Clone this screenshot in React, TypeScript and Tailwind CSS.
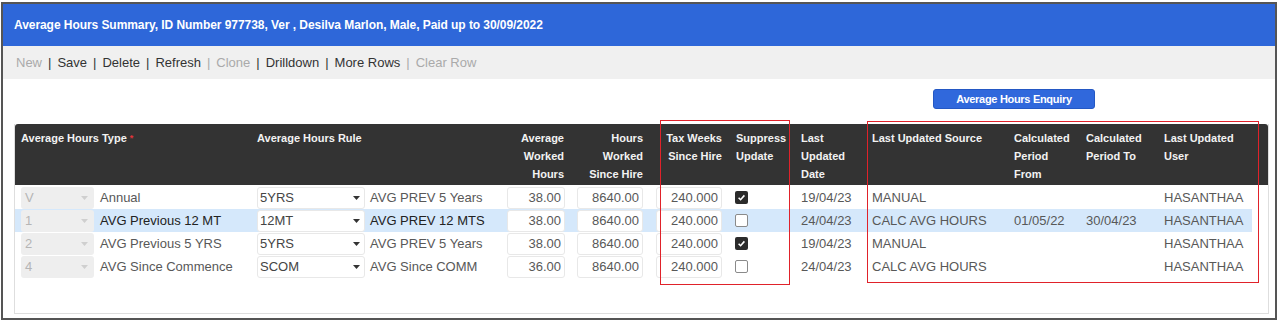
type Row = {
  code: string;
  type: string;
  rule: string;
  ruleDesc: string;
  avg: string;
  hours: string;
  weeks: string;
  suppress: boolean;
  date: string;
  source: string;
  from: string;
  to: string;
  user: string;
  selected?: boolean;
};

const rows: Row[] = [
  { code: "V", type: "Annual", rule: "5YRS", ruleDesc: "AVG PREV 5 Years", avg: "38.00", hours: "8640.00", weeks: "240.000", suppress: true, date: "19/04/23", source: "MANUAL", from: "", to: "", user: "HASANTHAA" },
  { code: "1", type: "AVG Previous 12 MT", rule: "12MT", ruleDesc: "AVG PREV 12 MTS", avg: "38.00", hours: "8640.00", weeks: "240.000", suppress: false, date: "24/04/23", source: "CALC AVG HOURS", from: "01/05/22", to: "30/04/23", user: "HASANTHAA", selected: true },
  { code: "2", type: "AVG Previous 5 YRS", rule: "5YRS", ruleDesc: "AVG PREV 5 Years", avg: "38.00", hours: "8640.00", weeks: "240.000", suppress: true, date: "19/04/23", source: "MANUAL", from: "", to: "", user: "HASANTHAA" },
  { code: "4", type: "AVG Since Commence", rule: "SCOM", ruleDesc: "AVG Since COMM", avg: "36.00", hours: "8640.00", weeks: "240.000", suppress: false, date: "24/04/23", source: "CALC AVG HOURS", from: "", to: "", user: "HASANTHAA" },
];

const tools = [
  { label: "New", enabled: false },
  { label: "Save", enabled: true },
  { label: "Delete", enabled: true },
  { label: "Refresh", enabled: true },
  { label: "Clone", enabled: false },
  { label: "Drilldown", enabled: true },
  { label: "More Rows", enabled: true },
  { label: "Clear Row", enabled: false },
];

function Caret({ light }: { light?: boolean }) {
  return (
    <svg width="7" height="4" viewBox="0 0 7 4" className="shrink-0">
      <path d="M0 0h7L3.5 4z" fill={light ? "#cfcfcf" : "#333"} />
    </svg>
  );
}

function Check({ on }: { on: boolean }) {
  if (on) {
    return (
      <span className="flex h-[13px] w-[13px] items-center justify-center rounded-[2px] bg-[#2b2b2b]">
        <svg width="9" height="9" viewBox="0 0 9 9">
          <path d="M1.6 4.7l2 2 3.8-4.3" fill="none" stroke="#fff" strokeWidth="1.6" />
        </svg>
      </span>
    );
  }
  return <span className="h-[13px] w-[13px] rounded-[2px] border border-[#8a8a8a] bg-white" />;
}

export default function App() {
  return (
    <div className="relative h-[327px] w-[1280px] overflow-hidden bg-white pt-[2px] pl-[1px] font-['Liberation_Sans',Arial,sans-serif]">
      <div className="flex h-[318px] w-[1276px] flex-col border-2 border-[#555]">
        {/* title bar */}
        <div className="flex h-[42px] items-center bg-[#2e67d9] pl-[11px] text-[12px] font-bold tracking-[-0.06px] text-white">
          Average Hours Summary, ID Number 977738, Ver , Desilva Marlon, Male, Paid up to 30/09/2022
        </div>

        {/* toolbar */}
        <div className="flex h-[33px] items-center bg-[#f0f0f0] pl-[13px] text-[13px]">
          {tools.map((t, i) => (
            <span key={t.label} className={`flex items-center ${t.enabled ? "text-[#333]" : "text-[#aaa]"}`}>
              {i > 0 && <span className="mx-[6px]">|</span>}
              {t.label}
            </span>
          ))}
        </div>

        {/* enquiry button */}
        <div className="mt-[10px] ml-[930px] flex h-[20px] w-[162px] items-center justify-center rounded-[3px] border border-[#2458c4] bg-[#3068dc] text-[11px] font-bold tracking-[-0.3px] text-white">
          Average Hours Enquiry
        </div>

        {/* grid panel */}
        <div className="mt-[15px] ml-[11px] flex h-[190px] w-[1255px] flex-col border-x border-b border-[#dedede]">
          <div className="grid h-[61px] grid-cols-[82px_156px_114px_137px_66px_80px_78px_67px_71px_142px_72px_78px_1fr] rounded-t-[3px] bg-[#333] pt-[5px] text-[11px] font-bold leading-[18px] text-[#f2f2f2]">
            <div className="col-span-2 pl-[6px]">
              Average Hours Type<span className="ml-[3px] align-top text-[9px] text-[#e0343a]">*</span>
            </div>
            <div className="col-span-2 pl-[4px]">Average Hours Rule</div>
            <div className="pr-[6px] text-right">Average<br />Worked<br />Hours</div>
            <div className="pr-[7px] text-right">Hours<br />Worked<br />Since Hire</div>
            <div className="pr-[6px] text-right">Tax Weeks<br />Since Hire</div>
            <div className="pl-[8px]">Suppress<br />Update</div>
            <div className="pl-[6px]">Last<br />Updated<br />Date</div>
            <div className="pl-[6px]">Last Updated Source</div>
            <div className="pl-[6px]">Calculated<br />Period<br />From</div>
            <div className="pl-[6px]">Calculated<br />Period To</div>
            <div className="pl-[6px]">Last Updated<br />User</div>
          </div>

          <div className="flex flex-col pt-[1px] text-[13px] text-[#585858]">
            {rows.map((r) => (
              <div
                key={r.code}
                className={`grid h-[23px] w-[1237px] grid-cols-[82px_156px_114px_137px_66px_80px_78px_67px_71px_142px_72px_78px_94px] items-center ${r.selected ? "bg-[#d5e8fb]" : ""}`}
              >
                <div className="pl-[6px]">
                  <div className="flex h-[22px] w-[73px] items-center justify-between rounded-[3px] bg-[#eee] pr-[6px] pl-[4px] text-[#b5b5b5]">
                    {r.code}
                    <Caret light />
                  </div>
                </div>
                <div className={`pl-[3px] ${r.selected ? "text-[#222]" : ""}`}>{r.type}</div>
                <div className="pl-[4px]">
                  <div className="flex h-[22px] w-[108px] items-center justify-between rounded-[3px] border border-[#e8e8e8] bg-white pr-[4px] pl-[2px] text-[#444]">
                    {r.rule}
                    <Caret />
                  </div>
                </div>
                <div className={`pl-[3px] ${r.selected ? "text-[#222]" : ""}`}>{r.ruleDesc}</div>
                <div className="pl-[3px]">
                  <div className="flex h-[22px] w-[58px] items-center justify-end rounded-[3px] border border-[#e8e8e8] bg-white pr-[3px]">
                    {r.avg}
                  </div>
                </div>
                <div className="pl-[7px]">
                  <div className="flex h-[22px] w-[66px] items-center justify-end rounded-[3px] border border-[#e8e8e8] bg-white pr-[3px]">
                    {r.hours}
                  </div>
                </div>
                <div className="pl-[6px]">
                  <div className="flex h-[22px] w-[66px] items-center justify-end rounded-[3px] border border-[#e8e8e8] bg-white pr-[3px]">
                    {r.weeks}
                  </div>
                </div>
                <div className="flex pl-[7px]">
                  <Check on={r.suppress} />
                </div>
                <div className="pl-[6px]">{r.date}</div>
                <div className="pl-[6px]">{r.source}</div>
                <div className="pl-[6px]">{r.from}</div>
                <div className="pl-[6px]">{r.to}</div>
                <div className="pl-[6px]">{r.user}</div>
              </div>
            ))}
          </div>
        </div>
      </div>

      {/* review annotations */}
      <div className="absolute top-[120px] left-[660px] h-[165px] w-[130px] border-[1.5px] border-[#e0222a]" />
      <div className="absolute top-[121px] left-[867px] h-[162px] w-[392px] border-[1.5px] border-[#e0222a]" />
    </div>
  );
}
